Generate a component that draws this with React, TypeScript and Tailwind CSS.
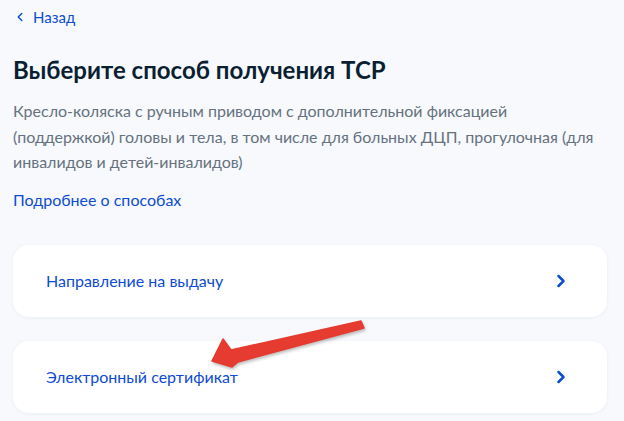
import { ChevronLeft, ChevronRight } from "lucide-react";

const options = ["Направление на выдачу", "Электронный сертификат"];

export default function App() {
  return (
    <main
      className="relative min-h-screen w-[624px] h-[421px] overflow-hidden bg-[#f7f9fc] pl-[13px] pr-[17px] pt-[7px] text-[#0b1f33]"
      style={{ fontFamily: "Lato, 'Noto Sans', sans-serif" }}
    >
      <a href="#" className="flex items-center gap-[6px] text-[15px] leading-[20px] text-[#0d4cd3]">
        <ChevronLeft className="h-[14px] w-[14px]" strokeWidth={2.5} />
        Назад
      </a>

      <h1 className="mt-[28px] text-[24px] font-bold leading-[30px]">Выберите способ получения ТСР</h1>

      <p className="mt-[13px] text-[16px] leading-[25.5px] text-[#66727f]">
        Кресло-коляска с ручным приводом с дополнительной фиксацией (поддержкой) головы и тела, в том числе для
        больных ДЦП, прогулочная (для инвалидов и детей-инвалидов)
      </p>

      <a href="#" className="mt-[15px] block text-[16px] leading-[20px] text-[#0d4cd3]">
        Подробнее о способах
      </a>

      <div className="mt-[35px] flex flex-col gap-[24px]">
        {options.map((o) => (
          <div
            key={o}
            className="flex h-[72px] items-center justify-between rounded-[16px] bg-white pl-[33px] pr-[36px] shadow-[0_1px_4px_rgba(30,60,140,0.06)]"
          >
            <span className="text-[16px] text-[#0d4cd3]">{o}</span>
            <ChevronRight className="h-[20px] w-[20px] text-[#0d4cd3]" strokeWidth={3} />
          </div>
        ))}
      </div>

      {/* red annotation arrow over the second option */}
      <svg className="absolute left-0 top-0" width="624" height="421" viewBox="0 0 624 421">
        <polygon
          points="361,321 364,328 238,362 232,367 212,361 223,339 231,350"
          fill="#e53b30"
          stroke="#e53b30"
          strokeWidth="1.5"
          strokeLinejoin="round"
          style={{ filter: "drop-shadow(1px 2px 1.5px rgba(0,0,0,0.25))" }}
        />
      </svg>
    </main>
  );
}
